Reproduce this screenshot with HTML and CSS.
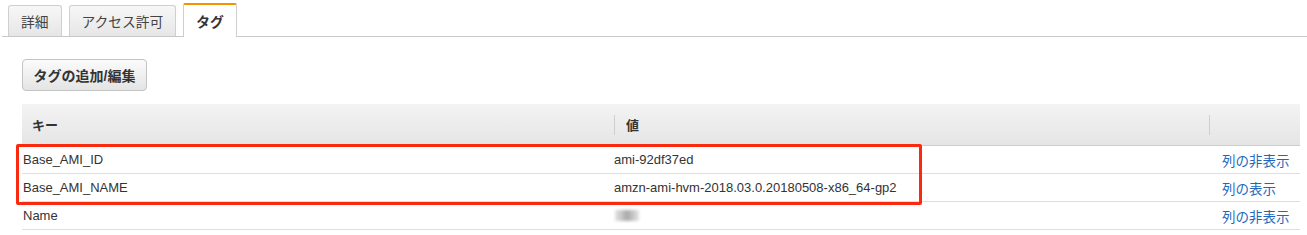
FILE: index.html
```html
<!DOCTYPE html>
<html lang="ja">
<head>
<meta charset="utf-8">
<title>タグ</title>
<link rel="stylesheet" href="styles.css">
</head>
<body>
  <div class="tabs">
    <div class="tab">詳細</div>
    <div class="tab">アクセス許可</div>
    <div class="tab active">タグ</div>
  </div>
  <div class="toolbar">
    <button class="btn">タグの追加/編集</button>
  </div>
  <div class="table">
    <div class="thead">
      <div class="th first">キー</div>
      <div class="th sep">値</div>
      <div class="th sep"></div>
    </div>
    <div class="row">
      <div class="td key">Base_AMI_ID</div>
      <div class="td">ami-92df37ed</div>
      <div class="td"><a class="link">列の非表示</a></div>
    </div>
    <div class="row">
      <div class="td key">Base_AMI_NAME</div>
      <div class="td">amzn-ami-hvm-2018.03.0.20180508-x86_64-gp2</div>
      <div class="td"><a class="link">列の表示</a></div>
    </div>
    <div class="row">
      <div class="td key">Name</div>
      <div class="td"><span class="masked"></span></div>
      <div class="td"><a class="link">列の非表示</a></div>
    </div>
    <div class="highlight"></div>
  </div>
</body>
</html>
```
FILE: styles.css
```css
html, body {
  margin: 0;
  padding: 0;
  background: #fff;
}
body {
  font-family: "Liberation Sans", "Noto Sans CJK JP", sans-serif;
  color: #333;
  font-size: 13px;
}
.tabs {
  display: flex;
  align-items: flex-end;
  gap: 7px;
  margin-left: 2px;
  padding: 3px 0 0 6px;
  height: 33px;
  border-bottom: 1px solid #c8c8c8;
}
.tab {
  box-sizing: border-box;
  height: 31px;
  padding: 0 12px;
  display: flex;
  align-items: center;
  font-size: 13.75px;
  color: #444;
  background: linear-gradient(#f7f7f7, #e6e6e6);
  border: 1px solid #cfcfcf;
  border-bottom: none;
  border-radius: 3px 3px 0 0;
}
.tab.active {
  height: 34px;
  margin-bottom: -1px;
  background: #fff;
  border-top: 2px solid #f29300;
  border-radius: 2px 2px 0 0;
  font-weight: bold;
  color: #333;
  padding-bottom: 1px;
}
.toolbar {
  padding: 22px 0 0 22px;
}
.btn {
  box-sizing: border-box;
  height: 32px;
  width: 125px;
  padding: 0;
  font-family: "Liberation Sans", "Noto Sans CJK JP", sans-serif;
  font-size: 14px;
  font-weight: bold;
  color: #333;
  background: linear-gradient(#fbfbfb, #e4e4e4);
  border: 1px solid #c4c4c4;
  border-radius: 4px;
}
.table {
  position: relative;
  margin: 13px 7px 0 22px;
}
.thead {
  display: grid;
  grid-template-columns: 592px 595px 1fr;
  height: 41px;
  background: linear-gradient(#f3f3f3, #e5e5e5);
  border-bottom: 1px solid #cdcdcd;
}
.th {
  position: relative;
  display: flex;
  align-items: center;
  font-weight: bold;
  font-size: 13px;
  color: #333;
}
.th.first {
  padding-left: 10px;
}
.th.sep {
  padding-left: 12px;
}
.th.sep::before {
  content: "";
  position: absolute;
  left: 0;
  top: 11px;
  bottom: 10px;
  width: 1px;
  background: #cfcfcf;
}
.row {
  display: grid;
  grid-template-columns: 592px 608px 1fr;
  height: 27px;
  border-bottom: 1px solid #dedede;
}
.td {
  display: flex;
  align-items: center;
  white-space: nowrap;
}
.td.key {
  padding-left: 1px;
}
.link {
  color: #1d68b9;
  font-size: 13.5px;
  text-decoration: none;
}
.masked {
  display: inline-block;
  width: 24px;
  height: 11px;
  margin-left: 1px;
  background: linear-gradient(90deg, #e4e4e4 0%, #c9c9c9 25%, #a9a9a9 50%, #c6c6c6 75%, #e6e6e6 100%);
  filter: blur(1.5px);
}
.highlight {
  position: absolute;
  left: -6px;
  top: 40px;
  width: 900px;
  height: 55px;
  border: 3px solid #fa2a10;
  border-radius: 2px;
  pointer-events: none;
}
```
